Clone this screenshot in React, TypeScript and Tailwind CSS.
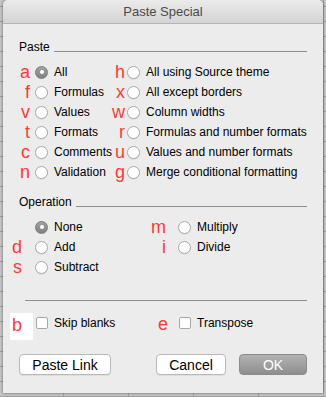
const FONT = "font-['Liberation_Sans','Helvetica_Neue',Arial,sans-serif]";

function Radio({ on }: { on?: boolean }) {
  if (on) {
    return (
      <span className="flex h-[13px] w-[13px] shrink-0 items-center justify-center rounded-full border border-[#7a7a7a] bg-gradient-to-b from-[#a3a3a3] to-[#808080]">
        <span className="block h-[4px] w-[4px] rounded-full bg-white" />
      </span>
    );
  }
  return <span className="block h-[13px] w-[13px] shrink-0 rounded-full border border-[#a8a8a8] bg-white shadow-[0_1px_0_rgba(0,0,0,0.05)]" />;
}

function Check() {
  return <span className="block h-[12px] w-[12px] shrink-0 rounded-[2px] border border-[#a8a8a8] bg-white" />;
}

function Key({ ch, w }: { ch: string; w: string }) {
  return (
    <span className={`${w} shrink-0 text-right text-[18px] leading-none text-[#fb3b36]`}>{ch}</span>
  );
}

function Header({ title }: { title: string }) {
  return (
    <div className="flex h-[14px] items-start pl-[16px] pr-[16px] text-[12px] leading-[14px] text-black">
      <span>{title}</span>
      <span className="ml-[4px] mt-[11px] h-px flex-1 bg-[#8e8e8e]" />
    </div>
  );
}

const pasteRows: [string, string, boolean, string, string][] = [
  ['a', 'All', true, 'h', 'All using Source theme'],
  ['f', 'Formulas', false, 'x', 'All except borders'],
  ['v', 'Values', false, 'w', 'Column widths'],
  ['t', 'Formats', false, 'r', 'Formulas and number formats'],
  ['c', 'Comments', false, 'u', 'Values and number formats'],
  ['n', 'Validation', false, 'g', 'Merge conditional formatting'],
];

const opRows: [string, string, boolean, string, string][] = [
  ['', 'None', true, 'm', 'Multiply'],
  ['d', 'Add', false, 'i', 'Divide'],
  ['s', 'Subtract', false, '', ''],
];

export default function App() {
  return (
    <div
      className={`${FONT} h-[397px] w-[326px] overflow-hidden bg-[#c6c6c6] bg-[linear-gradient(#9e9e9e_1px,transparent_1px),linear-gradient(90deg,#a5a5a5_1px,transparent_1px)] bg-[size:65px_15px] bg-[position:-2px_6px]`}
    >
      <div className="ml-[3px] flex h-[393px] w-[320px] flex-col overflow-hidden rounded-t-[5px] bg-[#ececec] shadow-[0_0_3px_rgba(0,0,0,0.55)]">
        <div className="flex h-[24px] shrink-0 items-center justify-center border-b border-[#b5b5b5] bg-gradient-to-b from-[#ebebeb] to-[#d4d4d4] text-[13px] text-[#4a4a4a]">
          Paste Special
        </div>

        <div className="pt-[16px]">
          <Header title="Paste" />
          <div className="mt-[8px] text-[12px] text-black">
            {pasteRows.map(([k1, l1, on, k2, l2]) => (
              <div key={l1} className="grid h-[20px] grid-cols-[100px_1fr]">
                <div className="flex items-center">
                  <Key ch={k1} w="w-[27px]" />
                  <span className="ml-[5px] flex"><Radio on={on} /></span>
                  <span className="ml-[6px] whitespace-nowrap">{l1}</span>
                </div>
                <div className="flex items-center">
                  <Key ch={k2} w="w-[22px]" />
                  <span className="ml-[2px] flex"><Radio /></span>
                  <span className="ml-[6px] whitespace-nowrap">{l2}</span>
                </div>
              </div>
            ))}
          </div>

          <div className="mt-[13px]">
            <Header title="Operation" />
          </div>
          <div className="mt-[8px] text-[12px] text-black">
            {opRows.map(([k1, l1, on, k2, l2]) => (
              <div key={l1} className="grid h-[20px] grid-cols-[100px_1fr]">
                <div className="flex items-center">
                  <Key ch={k1} w="w-[19px]" />
                  <span className="ml-[13px] flex"><Radio on={on} /></span>
                  <span className="ml-[6px] whitespace-nowrap">{l1}</span>
                </div>
                {l2 && (
                  <div className="flex items-center">
                    <Key ch={k2} w="w-[63px]" />
                    <span className="ml-[12px] flex"><Radio /></span>
                    <span className="ml-[6px] whitespace-nowrap">{l2}</span>
                  </div>
                )}
              </div>
            ))}
          </div>

          <div className="ml-[22px] mr-[16px] mt-[23px] h-px bg-[#8e8e8e]" />

          <div className="mt-[12px] grid h-[27px] grid-cols-[100px_1fr] text-[12px] text-black">
            <div className="flex items-start">
              <span className="ml-[7px] h-[27px] w-[23px] shrink-0 bg-white pl-[2px] pt-[3px] text-[18px] leading-none text-[#fb3b36]">b</span>
              <span className="ml-[3px] mt-[4px] flex"><Check /></span>
              <span className="ml-[6px] mt-[3px] whitespace-nowrap leading-[14px]">Skip blanks</span>
            </div>
            <div className="flex items-start">
              <span className="w-[65px] shrink-0 pt-[2px] text-right text-[18px] leading-none text-[#fb3b36]">e</span>
              <span className="ml-[11px] mt-[4px] flex"><Check /></span>
              <span className="ml-[6px] mt-[3px] whitespace-nowrap leading-[14px]">Transpose</span>
            </div>
          </div>

          <div className="mt-[14px] flex items-center px-[16px] text-[14px]">
            <button className="h-[21px] w-[92px] rounded-[4px] border border-[#b9b9b9] bg-white leading-none text-black shadow-[0_1px_0_rgba(0,0,0,0.06)]">
              Paste Link
            </button>
            <span className="flex-1" />
            <button className="h-[21px] w-[70px] rounded-[4px] border border-[#b9b9b9] bg-white leading-none text-black shadow-[0_1px_0_rgba(0,0,0,0.06)]">
              Cancel
            </button>
            <button className="ml-[13px] h-[21px] w-[68px] rounded-[4px] border border-[#8c8c8c] bg-gradient-to-b from-[#b3b3b3] to-[#8e8e8e] leading-none text-white">
              OK
            </button>
          </div>
        </div>
      </div>
    </div>
  );
}
